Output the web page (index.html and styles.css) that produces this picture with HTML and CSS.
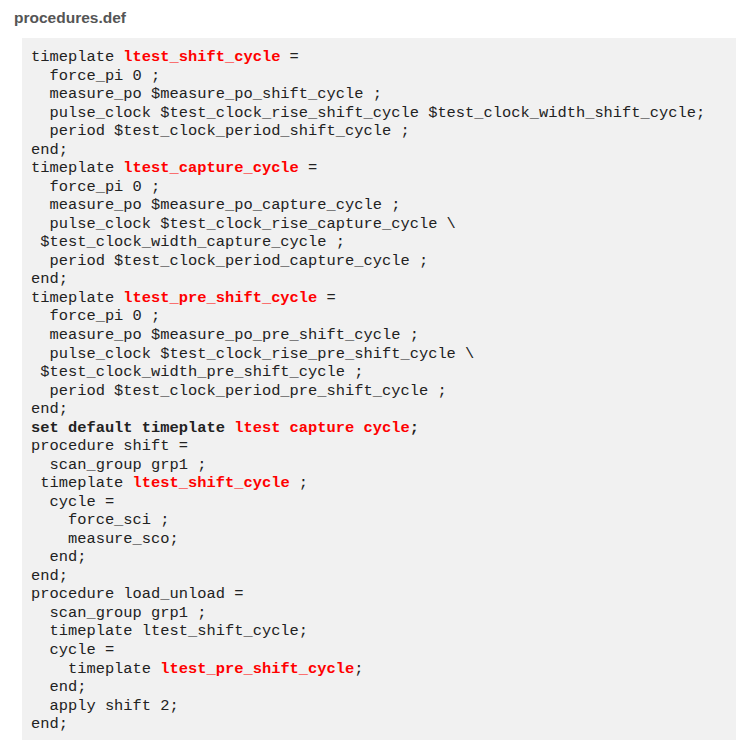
FILE: index.html
```html
<!DOCTYPE html>
<html>
<head>
<meta charset="utf-8">
<link rel="stylesheet" href="styles.css">
</head>
<body>
<div class="title">procedures.def</div>
<pre class="code">timeplate <span class="hl">ltest_shift_cycle</span> =
  force_pi 0 ;
  measure_po $measure_po_shift_cycle ;
  pulse_clock $test_clock_rise_shift_cycle $test_clock_width_shift_cycle;
  period $test_clock_period_shift_cycle ;
end;
timeplate <span class="hl">ltest_capture_cycle</span> =
  force_pi 0 ;
  measure_po $measure_po_capture_cycle ;
  pulse_clock $test_clock_rise_capture_cycle \
 $test_clock_width_capture_cycle ;
  period $test_clock_period_capture_cycle ;
end;
timeplate <span class="hl">ltest_pre_shift_cycle</span> =
  force_pi 0 ;
  measure_po $measure_po_pre_shift_cycle ;
  pulse_clock $test_clock_rise_pre_shift_cycle \
 $test_clock_width_pre_shift_cycle ;
  period $test_clock_period_pre_shift_cycle ;
end;
<b class="strong">set default timeplate <span class="hl">ltest capture cycle</span>;</b>
procedure shift =
  scan_group grp1 ;
 timeplate <span class="hl">ltest_shift_cycle</span> ;
  cycle =
    force_sci ;
    measure_sco;
  end;
end;
procedure load_unload =
  scan_group grp1 ;
  timeplate ltest_shift_cycle;
  cycle =
    timeplate <span class="hl">ltest_pre_shift_cycle</span>;
  end;
  apply shift 2;
end;</pre>
</body>
</html>
```

FILE: styles.css
```css
html, body {
  margin: 0;
  padding: 0;
  background: #ffffff;
}

.title {
  margin: 8px 0 0 14px;
  font-family: "Liberation Sans", Arial, sans-serif;
  font-weight: bold;
  font-size: 15.5px;
  line-height: 20px;
  color: #555555;
}

.code {
  margin: 10px 14px 0 22px;
  padding: 10px 9px 6px 9px;
  background: #f1f1f1;
  font-family: "Liberation Mono", "Courier New", monospace;
  font-size: 15.4px;
  line-height: 18.53px;
  color: #222222;
  white-space: pre;
  overflow: hidden;
}

.hl {
  color: #ff0000;
  font-weight: bold;
}

.strong {
  font-weight: bold;
}
```
